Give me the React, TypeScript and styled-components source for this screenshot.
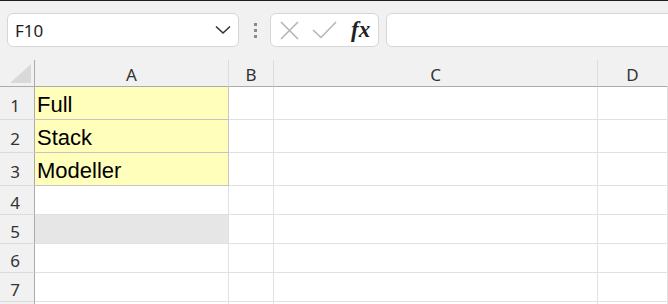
import React, {FC} from 'react';
import styled, {createGlobalStyle} from 'styled-components';

const GlobalStyle = createGlobalStyle`
  html, body {
    margin: 0;
    padding: 0;
    background: #ffffff;
    overflow: hidden;
  }
  * {
    box-sizing: border-box;
  }
`;

const UI_FONT = `"Noto Sans", "Open Sans", "DejaVu Sans", sans-serif`;

const Page = styled.div`
  width: 668px;
  height: 304px;
  display: flex;
  flex-direction: column;
  border-top: 1px solid #1f1f1f;
  background: #ffffff;
`;

const Toolbar = styled.div`
  height: 59px;
  flex: none;
  display: flex;
  align-items: center;
  padding: 0 0 1px 7px;
  background: #f1f1f1;
  font-family: ${UI_FONT};
`;

const NameBox = styled.div`
  width: 232px;
  height: 34px;
  flex: none;
  display: flex;
  align-items: center;
  justify-content: space-between;
  padding: 0 7px 0 7px;
  background: #ffffff;
  border: 1px solid #d6d6d6;
  border-radius: 6px;
  font-size: 17px;
  color: #1e1e1e;
`;

const Grip = styled.div`
  width: 31px;
  flex: none;
  display: flex;
  flex-direction: column;
  align-items: center;
  gap: 3px;
  padding-left: 2px;

  span {
    width: 3px;
    height: 3px;
    background: #8a8a8a;
  }
`;

const FormulaButtons = styled.div`
  width: 109px;
  height: 34px;
  flex: none;
  display: flex;
  align-items: center;
  padding-left: 9px;
  gap: 13px;
  background: #ffffff;
  border: 1px solid #d6d6d6;
  border-radius: 6px;
`;

const FxLabel = styled.span`
  font-family: "Liberation Serif", "DejaVu Serif", serif;
  font-style: italic;
  font-weight: bold;
  font-size: 23px;
  color: #222222;
  margin-left: 1px;
  line-height: 1;
  padding-bottom: 2px;
`;

const FormulaInput = styled.div`
  flex: 1;
  height: 34px;
  margin-left: 7px;
  margin-right: -10px;
  background: #ffffff;
  border: 1px solid #d6d6d6;
  border-radius: 6px;
`;

const Sheet = styled.div`
  flex: 1;
  display: grid;
  grid-template-columns: 35px 194px 45px 324px 1fr;
  grid-template-rows: 27px 33px 33px 33px 29px 29px 29px 29px 29px;
  overflow: hidden;
`;

const Corner = styled.div`
  background: #f1f1f1;
  border-right: 1px solid #ababab;
  border-bottom: 1px solid #ababab;
  display: flex;
  align-items: flex-end;
  justify-content: flex-end;
  padding: 0 3px 3px 0;
`;

const ColHeader = styled.div<{ $last?: boolean }>`
  background: #f1f1f1;
  border-right: 1px solid ${(p) => (p.$last ? 'transparent' : '#dcdcdc')};
  border-bottom: 1px solid #ababab;
  display: flex;
  align-items: center;
  justify-content: center;
  padding-top: 2px;
  font-family: ${UI_FONT};
  font-size: 17px;
  color: #333333;
`;

const RowHeader = styled.div`
  background: #f1f1f1;
  border-right: 1px solid #ababab;
  border-bottom: 1px solid #dcdcdc;
  display: flex;
  align-items: center;
  justify-content: center;
  padding: 4px 4px 0 0;
  font-family: ${UI_FONT};
  font-size: 17px;
  color: #333333;
`;

type TFill = 'none' | 'yellow' | 'gray';

const fills: Record<TFill, string> = {
  none: '#ffffff',
  yellow: '#ffffbb',
  gray: '#e6e6e6',
};

const Cell = styled.div<{ $fill: TFill }>`
  background: ${(p) => fills[p.$fill]};
  border-right: 1px solid ${(p) => (p.$fill === 'yellow' ? '#c4c4c4' : '#e1e1e1')};
  border-bottom: 1px solid ${(p) => (p.$fill === 'yellow' ? '#c4c4c4' : '#e1e1e1')};
  display: flex;
  align-items: flex-end;
  padding: 0 0 1px 2px;
  font-family: "Liberation Sans", Arial, sans-serif;
  font-size: 22px;
  line-height: 26px;
  color: #000000;
  white-space: nowrap;
  overflow: hidden;
`;

const columns = ['A', 'B', 'C', 'D'];

// the 8th row only peeks in at the bottom edge, so its number is left out
const rows: { label?: string; text?: string; fill: TFill }[] = [
  { label: '1', text: 'Full', fill: 'yellow' },
  { label: '2', text: 'Stack', fill: 'yellow' },
  { label: '3', text: 'Modeller', fill: 'yellow' },
  { label: '4', fill: 'none' },
  { label: '5', fill: 'gray' },
  { label: '6', fill: 'none' },
  { label: '7', fill: 'none' },
  { fill: 'none' },
];

const Chevron: FC = () => (
  <svg width="16" height="10" viewBox="0 0 16 10">
    <path d="M1 1.5 L8 8 L15 1.5" fill="none" stroke="#333" strokeWidth="1.6" />
  </svg>
);

const CancelIcon: FC = () => (
  <svg width="19" height="19" viewBox="0 0 19 19">
    <path d="M1 1 L18 18 M18 1 L1 18" fill="none" stroke="#b5b5b5" strokeWidth="1.6" />
  </svg>
);

const CheckIcon: FC = () => (
  <svg width="25" height="18" viewBox="0 0 25 18">
    <path d="M1 9 L9 16.5 L24 1" fill="none" stroke="#b5b5b5" strokeWidth="1.6" />
  </svg>
);

const CornerMark: FC = () => (
  <svg width="21" height="19" viewBox="0 0 21 19">
    <polygon points="21,0 21,19 0,19" fill="#d9d9d9" />
  </svg>
);

const App: FC = () => {
  return (
    <>
      <GlobalStyle />
      <Page>
        <Toolbar>
          <NameBox>
            <span>F10</span>
            <Chevron />
          </NameBox>
          <Grip>
            <span />
            <span />
            <span />
          </Grip>
          <FormulaButtons>
            <CancelIcon />
            <CheckIcon />
            <FxLabel>fx</FxLabel>
          </FormulaButtons>
          <FormulaInput />
        </Toolbar>
        <Sheet>
          <Corner>
            <CornerMark />
          </Corner>
          {columns.map((c, i) => (
            <ColHeader key={c} $last={i === columns.length - 1}>{c}</ColHeader>
          ))}
          {rows.map((r, i) => (
            <React.Fragment key={i}>
              <RowHeader>{r.label}</RowHeader>
              <Cell $fill={r.fill}>{r.text}</Cell>
              <Cell $fill="none" />
              <Cell $fill="none" />
              <Cell $fill="none" />
            </React.Fragment>
          ))}
        </Sheet>
      </Page>
    </>
  );
};

export default App;
